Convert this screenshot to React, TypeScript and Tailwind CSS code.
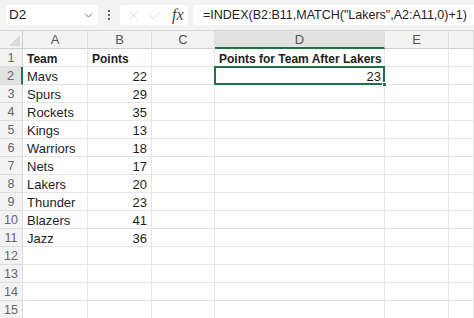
import { ChevronDown, X, Check } from 'lucide-react'

const COLS = ['A', 'B', 'C', 'D', 'E', '']

const DATA: [string, string][] = [
  ['Mavs', '22'],
  ['Spurs', '29'],
  ['Rockets', '35'],
  ['Kings', '13'],
  ['Warriors', '18'],
  ['Nets', '17'],
  ['Lakers', '20'],
  ['Thunder', '23'],
  ['Blazers', '41'],
  ['Jazz', '36'],
]

const FONT = { fontFamily: '"Liberation Sans", Arial, sans-serif' }

function FormulaBar() {
  return (
    <div className="flex h-[31px] items-center border-b border-[#d6d6d6] bg-[#f3f3f3] pl-[6px]">
      <div className="flex h-[20px] w-[92px] shrink-0 items-center justify-between rounded-[3px] bg-white pl-[3px] pr-[3px] text-[13.5px] text-[#222]">
        D2
        <ChevronDown size={13} strokeWidth={1.5} className="text-[#555]" />
      </div>
      <div className="flex w-[22px] shrink-0 flex-col items-center gap-[2px]">
        <span className="h-[2px] w-[2px] bg-[#666]" />
        <span className="h-[2px] w-[2px] bg-[#666]" />
        <span className="h-[2px] w-[2px] bg-[#666]" />
      </div>
      <div className="flex h-[20px] w-[68px] shrink-0 items-center rounded-[3px] bg-white pl-[6px] text-[#c4c4c4]">
        <X size={15} strokeWidth={1.1} />
        <Check size={15} strokeWidth={1.1} className="ml-[7px]" />
        <span className="ml-[9px] text-[16px] italic text-[#444]" style={{ fontFamily: '"Liberation Serif", serif' }}>
          fx
        </span>
      </div>
      <div className="ml-[5px] flex h-[20px] flex-1 items-center rounded-l-[3px] bg-white pl-[10px] text-[12.5px] text-[#222]">
        =INDEX(B2:B11,MATCH("Lakers",A2:A11,0)+1)
      </div>
    </div>
  )
}

function Cell({ children, className = '' }: { children?: React.ReactNode; className?: string }) {
  return (
    <div className={`flex h-[18px] items-center whitespace-nowrap border-b border-r border-[#e6e6e6] px-[4px] pt-[2px] ${className}`}>
      {children}
    </div>
  )
}

function Row({ n, cells }: { n: number; cells: string[] }) {
  const sel = n === 2
  const head = n === 1
  return (
    <>
      <div
        className={`flex h-[18px] items-center justify-center border-b pt-[2px] text-[12.5px] text-[#666] ${
          sel
            ? 'border-r-2 border-r-[#217346] border-b-[#dedede] bg-[#e2e2e2]'
            : 'border-r border-[#dedede] bg-[#f3f3f3]'
        }`}
      >
        {n}
      </div>
      <Cell className={head ? 'text-[12px] font-bold' : 'text-[13px]'}>{cells[0]}</Cell>
      <Cell className={head ? 'text-[12px] font-bold' : 'justify-end text-[13px]'}>{cells[1]}</Cell>
      <Cell />
      {sel ? (
        <div className="relative h-[18px] border-b border-r border-[#e6e6e6]">
          <div className="absolute -left-px -top-px bottom-[-1px] right-[-1px] flex items-center justify-end border-2 border-[#217346] pr-[2px] pt-[2px] text-[13px]">
            23
          </div>
          <div className="absolute bottom-[-3px] right-[-3px] h-[5px] w-[5px] border border-white bg-[#217346]" />
        </div>
      ) : (
        <Cell className={head ? 'text-[12px] font-bold' : 'text-[13px]'}>{cells[3]}</Cell>
      )}
      <Cell />
      <Cell />
    </>
  )
}

export default function App() {
  const rows: string[][] = []
  rows.push(['Team', 'Points', '', 'Points for Team After Lakers', '', ''])
  DATA.forEach(([t, p], i) => rows.push([t, p, '', i === 0 ? '23' : '', '', '']))
  while (rows.length < 15) rows.push(['', '', '', '', '', ''])

  return (
    <div className="h-[318px] w-[474px] overflow-hidden bg-white text-[#1e1e1e]" style={FONT}>
      <FormulaBar />
      <div className="grid grid-cols-[23px_65px_64px_63px_170px_64px_1fr]">
        <div className="relative h-[18px] border-b border-r border-[#d0d0d0] bg-[#f3f3f3]">
          <div
            className="absolute bottom-[2px] right-[2px] h-0 w-0"
            style={{ borderBottom: '11px solid #d9d9d9', borderLeft: '11px solid transparent' }}
          />
        </div>
        {COLS.map((c) => (
          <div
            key={c || 'f'}
            className={`flex h-[18px] items-center justify-center border-r pt-[1px] text-[13px] text-[#555] ${
              c === 'D'
                ? 'border-b-2 border-b-[#217346] border-r-[#dedede] bg-[#e2e2e2]'
                : 'border-b border-b-[#d0d0d0] border-r-[#dedede] bg-[#f3f3f3]'
            }`}
          >
            {c}
          </div>
        ))}
        {rows.map((r, i) => (
          <Row key={i} n={i + 1} cells={r} />
        ))}
      </div>
    </div>
  )
}
